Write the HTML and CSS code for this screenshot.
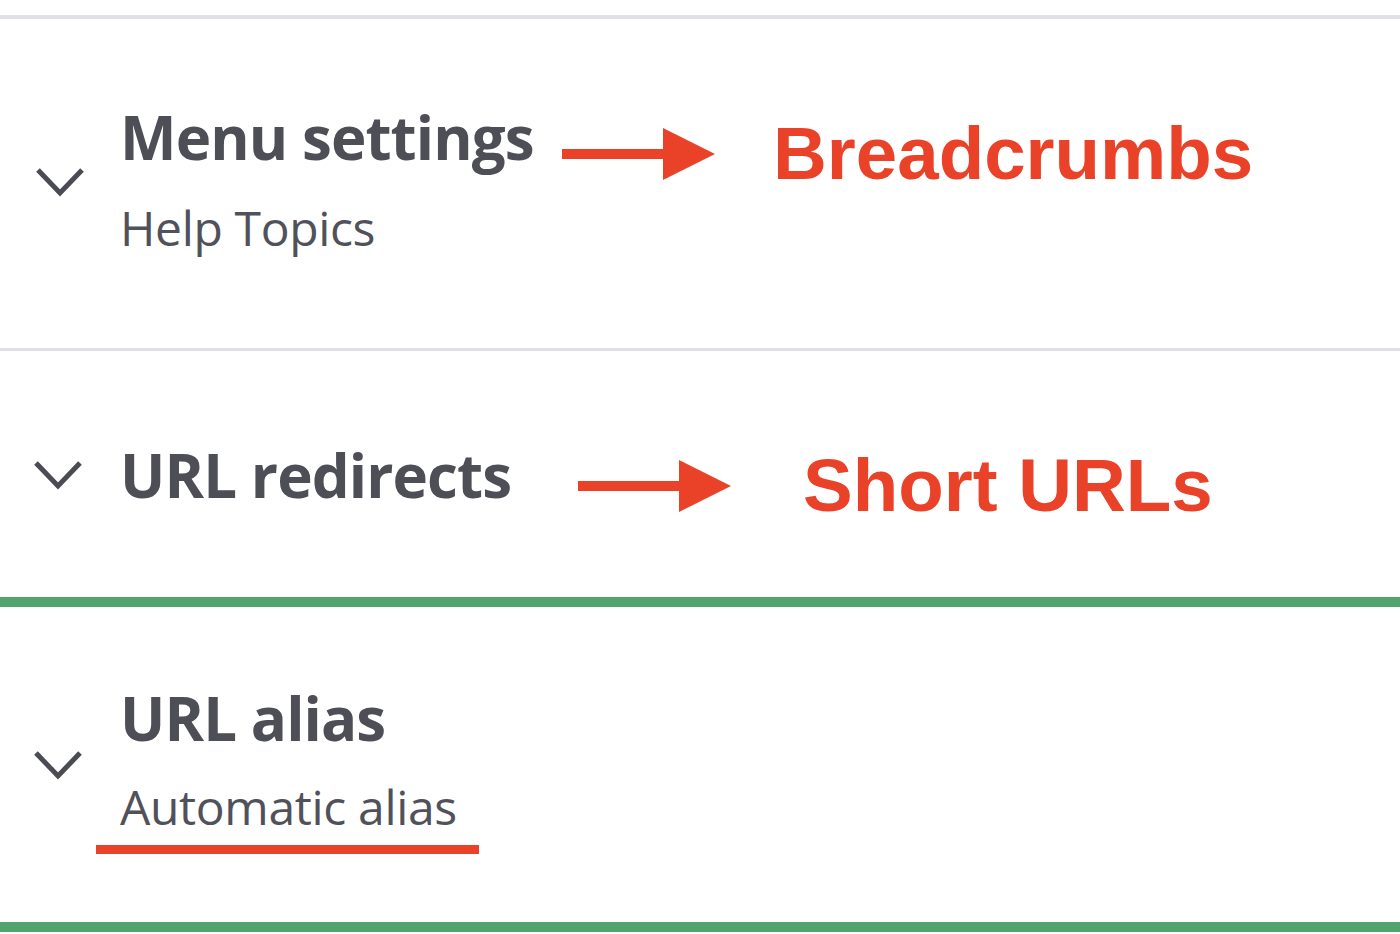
FILE: index.html
```html
<!DOCTYPE html>
<html lang="en">
<head>
<meta charset="utf-8">
<title>Node sidebar settings</title>
<link rel="stylesheet" href="styles.css">
</head>
<body>
<div class="sidebar">
  <section class="panel panel--menu">
    <svg class="chevron" viewBox="0 0 50 30" width="50" height="30" aria-hidden="true"><polyline points="3,3 25,26 47,3"/></svg>
    <div class="panel-text">
      <h2 class="panel-title">Menu settings</h2>
      <p class="panel-summary">Help Topics</p>
    </div>
    <div class="callout callout--menu">
      <svg class="callout-arrow" viewBox="0 0 153 52" width="153" height="52" aria-hidden="true"><rect x="0" y="21" width="103" height="10"/><polygon points="101,0 153,26 101,52"/></svg>
      <span class="callout-label">Breadcrumbs</span>
    </div>
  </section>

  <section class="panel panel--redirects">
    <svg class="chevron" viewBox="0 0 50 30" width="50" height="30" aria-hidden="true"><polyline points="3,3 25,26 47,3"/></svg>
    <div class="panel-text">
      <h2 class="panel-title">URL redirects</h2>
    </div>
    <div class="callout callout--redirects">
      <svg class="callout-arrow" viewBox="0 0 153 52" width="153" height="52" aria-hidden="true"><rect x="0" y="21" width="103" height="10"/><polygon points="101,0 153,26 101,52"/></svg>
      <span class="callout-label">Short URLs</span>
    </div>
  </section>

  <section class="panel panel--alias">
    <svg class="chevron" viewBox="0 0 50 30" width="50" height="30" aria-hidden="true"><polyline points="3,3 25,26 47,3"/></svg>
    <div class="panel-text">
      <h2 class="panel-title">URL alias</h2>
      <p class="panel-summary">Automatic alias</p>
      <div class="underline-mark"></div>
    </div>
  </section>
</div>
</body>
</html>
```

FILE: styles.css
```css
html, body {
  margin: 0;
  padding: 0;
  background: #ffffff;
}

body {
  width: 1400px;
  height: 934px;
  overflow: hidden;
  font-family: "Open Sans", "Noto Sans", sans-serif;
  color: #4f5058;
}

.sidebar {
  padding-top: 15px;
  border-top: 2px solid #f4f4f5;
  margin-top: -2px;
}

.panel {
  position: relative;
  display: flex;
  align-items: center;
  gap: 37px;
  padding-left: 33px;
  border-top: 4px solid #e0e1e4;
}

.panel--menu {
  padding-top: 82px;
  padding-bottom: 90px;
  border-bottom: 3px solid #e0e1e4;
}

.panel--menu .chevron {
  margin: 4px 0 0 2px;
}

.panel--redirects {
  border-top: 0;
  padding-top: 88px;
  padding-bottom: 86px;
  border-bottom: 10px solid #52a46e;
}

.panel--alias {
  border-top: 0;
  padding-top: 75px;
  padding-bottom: 68px;
  border-bottom: 10px solid #52a46e;
}

.panel--alias .chevron {
  margin-top: -6px;
}

.chevron {
  flex: none;
  display: block;
}

.chevron polyline {
  fill: none;
  stroke: #4a4b53;
  stroke-width: 5;
  stroke-linejoin: miter;
}

.panel--menu .panel-text {
  margin-left: -2px;
}

.panel-text {
  display: flex;
  flex-direction: column;
}

.panel-title {
  margin: 0;
  font-size: 60px;
  line-height: 72px;
  font-weight: 700;
  letter-spacing: -0.9px;
  color: #4d4e56;
}

.panel-summary {
  margin: 25px 0 0;
  font-size: 48px;
  line-height: 60px;
  font-weight: 400;
  letter-spacing: -0.35px;
  color: #50515a;
}

.panel--alias .panel-summary {
  margin-top: 23px;
}

.underline-mark {
  width: 383px;
  height: 9px;
  margin: 8px 0 0 -24px;
  background: #e94228;
}

/* red annotation callouts */
.callout {
  position: absolute;
  top: 98px;
  display: flex;
  align-items: center;
  color: #e94228;
}

.callout--menu {
  left: 562px;
}

.callout--redirects {
  left: 578px;
}

.callout-arrow {
  flex: none;
  display: block;
  fill: #e94228;
}

.callout-label {
  font-family: "Liberation Sans", Arial, sans-serif;
  font-weight: 700;
  font-size: 74.5px;
  line-height: 74px;
}

.callout--menu .callout-label {
  margin-left: 58px;
}

.callout--redirects .callout-label {
  margin-left: 72px;
}
```
